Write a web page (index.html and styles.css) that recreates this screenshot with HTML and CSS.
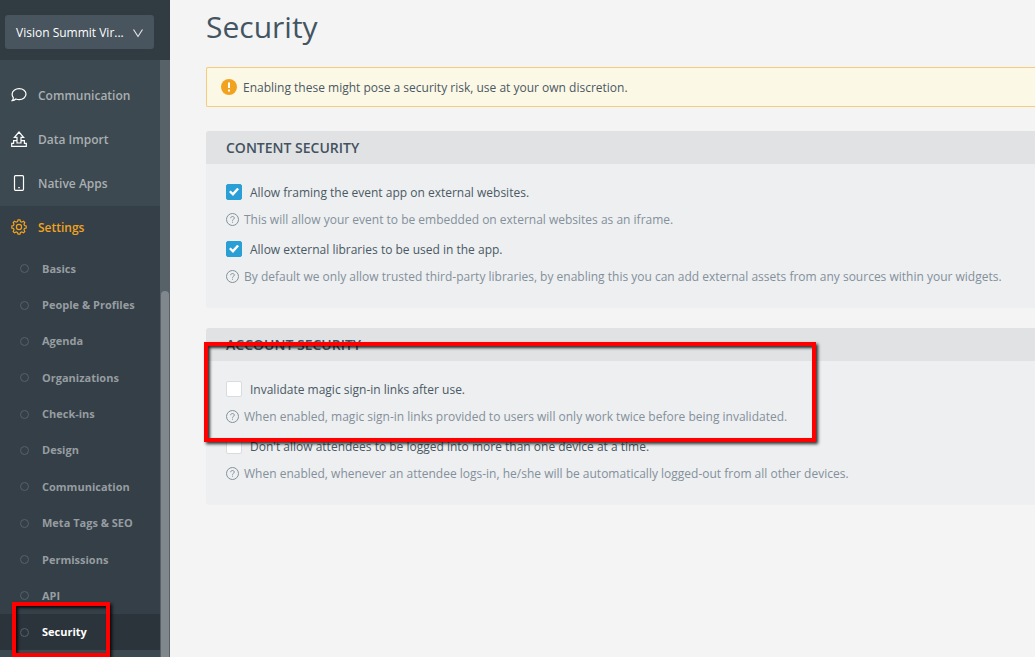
FILE: index.html
```html
<!DOCTYPE html>
<html lang="en">
<head>
<meta charset="utf-8">
<meta name="viewport" content="width=device-width, initial-scale=1">
<title>Security</title>
<link rel="stylesheet" href="styles.css">
</head>
<body>
<div class="app">
  <aside class="sidebar">
    <div class="sidebar-header">
      <button class="event-picker" type="button">
        <span class="event-name">Vision Summit Vir...</span>
        <svg class="chevron" width="12" height="10" viewBox="0 0 12 10"><path d="M1.500 1.500 6 8.500l4.500-7"/></svg>
      </button>
    </div>
    <div class="sidebar-body">
      <nav class="nav" aria-label="Main">
        <a class="nav-item" href="#communication">
          <svg class="nav-icon" width="16" height="18" viewBox="0 0 16 18"><path d="M8.200 1.700c3.900 0 6.800 2.300 6.800 5.300s-2.900 5.600-6.800 5.600c-1.200 0-2.300-.2-3.300-.6-1 1.100-2.200 1.600-3.800 1.700.9-.8 1.300-1.800 1.200-3C1.600 9.700 1.100 8.500 1.100 7.200c0-3.200 3.200-5.500 7.100-5.500z"/></svg>
          Communication
        </a>
        <a class="nav-item" href="#import">
          <svg class="nav-icon" width="16" height="18" viewBox="0 0 16 18"><path d="M6 12V6.300H3.400L8 1l4.600 5.300H10V12zM6 9.700H2.600v2.600H.700v3h14.600v-3h-1.900V9.700H10"/></svg>
          Data Import
        </a>
        <a class="nav-item" href="#apps">
          <svg class="nav-icon" width="16" height="18" viewBox="0 0 16 18"><rect x="3.500" y=".7" width="9" height="14.600" rx="1"/><path d="M7.300 12.700h1.500"/></svg>
          Native Apps
        </a>
        <div class="nav-group">
          <a class="nav-item nav-item-open" href="#settings">
            <svg class="nav-icon" width="16" height="18" viewBox="0 0 16 18"><path d="M6.500 2.600 7 .900h2l.5 1.700 1.300.6 1.700-.9 1.300 1.300-.8 1.700.5 1.200 1.700.5v2l-1.700.5-.5 1.300.8 1.700-1.300 1.300-1.700-.8-1.300.5-.5 1.700H7l-.5-1.700-1.300-.5-1.700.8-1.300-1.300.8-1.700-.5-1.300L.800 9V7l1.700-.5L3 5.300l-.8-1.700 1.300-1.300 1.700.9z"/><circle cx="8" cy="8" r="2.600"/></svg>
            Settings
          </a>
          <ul class="subnav">
            <li class="subnav-row"><a class="subnav-item" href="#basics">Basics</a></li>
            <li class="subnav-row"><a class="subnav-item" href="#people">People &amp; Profiles</a></li>
            <li class="subnav-row"><a class="subnav-item" href="#agenda">Agenda</a></li>
            <li class="subnav-row"><a class="subnav-item" href="#organizations">Organizations</a></li>
            <li class="subnav-row"><a class="subnav-item" href="#checkins">Check-ins</a></li>
            <li class="subnav-row"><a class="subnav-item" href="#design">Design</a></li>
            <li class="subnav-row"><a class="subnav-item" href="#messages">Communication</a></li>
            <li class="subnav-row"><a class="subnav-item" href="#meta">Meta Tags &amp; SEO</a></li>
            <li class="subnav-row"><a class="subnav-item" href="#permissions">Permissions</a></li>
            <li class="subnav-row"><a class="subnav-item" href="#api">API</a></li>
            <li class="subnav-row subnav-row-current"><a class="subnav-item" href="#security" aria-current="page">Security</a><span class="callout callout-nav"></span></li>
          </ul>
        </div>
      </nav>
      <div class="scroll-track"><div class="scroll-thumb"></div></div>
    </div>
  </aside>

  <main class="main">
    <h1 class="title">Security</h1>
    <div class="notice" role="note">
      <svg class="notice-icon" width="16" height="18" viewBox="0 0 16 18"><circle cx="8" cy="8" r="8" fill="#f1a31f"/><path d="M7 3.500h2v5.500H7zM7 10.500h2v2H7z" fill="#fff"/></svg>
      Enabling these might pose a security risk, use at your own discretion.
    </div>

    <section class="panel">
      <h2 class="panel-title">Content Security</h2>
      <div class="panel-body">
        <div class="setting">
          <label class="setting-label"><input class="check" type="checkbox" checked aria-describedby="h1">Allow framing the event app on external websites.</label>
          <p class="help" id="h1"><svg class="help-icon" width="13" height="14" viewBox="0 0 13 14"><circle cx="6.500" cy="6.500" r="6"/><path d="M4.700 5.200c0-1.100.8-1.700 1.800-1.700s1.800.6 1.800 1.600c0 1.300-1.800 1.200-1.800 2.600M6.500 8.700v1"/></svg>This will allow your event to be embedded on external websites as an iframe.</p>
        </div>
        <div class="setting">
          <label class="setting-label"><input class="check" type="checkbox" checked aria-describedby="h2">Allow external libraries to be used in the app.</label>
          <p class="help" id="h2"><svg class="help-icon" width="13" height="14" viewBox="0 0 13 14"><circle cx="6.500" cy="6.500" r="6"/><path d="M4.700 5.200c0-1.100.8-1.700 1.800-1.700s1.800.6 1.800 1.600c0 1.300-1.800 1.200-1.800 2.600M6.500 8.700v1"/></svg>By default we only allow trusted third-party libraries, by enabling this you can add external assets from any sources within your widgets.</p>
        </div>
      </div>
    </section>

    <section class="panel">
      <h2 class="panel-title">Account Security</h2>
      <div class="panel-body">
        <div class="setting">
          <label class="setting-label"><input class="check" type="checkbox" aria-describedby="h3">Invalidate magic sign-in links after use.</label>
          <p class="help" id="h3"><svg class="help-icon" width="13" height="14" viewBox="0 0 13 14"><circle cx="6.500" cy="6.500" r="6"/><path d="M4.700 5.200c0-1.100.8-1.700 1.800-1.700s1.800.6 1.800 1.600c0 1.300-1.800 1.200-1.800 2.600M6.500 8.700v1"/></svg>When enabled, magic sign-in links provided to users will only work twice before being invalidated.</p>
        </div>
        <div class="setting">
          <label class="setting-label"><input class="check" type="checkbox" aria-describedby="h4">Don't allow attendees to be logged into more than one device at a time.</label>
          <p class="help" id="h4"><svg class="help-icon" width="13" height="14" viewBox="0 0 13 14"><circle cx="6.500" cy="6.500" r="6"/><path d="M4.700 5.200c0-1.100.8-1.700 1.800-1.700s1.800.6 1.800 1.600c0 1.300-1.800 1.200-1.800 2.600M6.500 8.700v1"/></svg>When enabled, whenever an attendee logs-in, he/she will be automatically logged-out from all other devices.</p>
        </div>
      </div>
      <span class="callout callout-panel"></span>
    </section>
  </main>
</div>
</body>
</html>
```
FILE: styles.css
```css
* {
  box-sizing: border-box;
}

body {
  margin: 0;
  background: #f4f4f4;
  color: #4a5963;
  font: 12px/18px "Open Sans", "Noto Sans", sans-serif;
}

.app {
  display: flex;
  height: 100vh;
  overflow: hidden;
}

/* Sidebar */
.sidebar {
  display: flex;
  flex-direction: column;
  flex: none;
  width: 170px;
  background: #3d4950;
}

.sidebar-header {
  flex: none;
  padding: 15px 16px 11px 5px;
  background: #303b42;
}

.event-picker {
  display: flex;
  align-items: center;
  justify-content: space-between;
  width: 100%;
  height: 34px;
  padding: 2px 10px 0 11px;
  border: 0;
  border-radius: 3px;
  background: #48555e;
  color: #fff;
  font: 500 12px/16px "Open Sans", "Noto Sans", sans-serif;
  white-space: nowrap;
}

.chevron {
  flex: none;
  fill: none;
  stroke: #dde1e3;
  stroke-width: 1.2;
}

.sidebar-body {
  display: flex;
  flex: 1;
  min-height: 0;
}

.nav {
  flex: 1;
  padding-top: 14px;
}

.nav-item {
  display: flex;
  align-items: center;
  gap: 11px;
  height: 44px;
  padding-left: 11px;
  color: #a9afb2;
  font-weight: 700;
  font-weight: 600;
  text-decoration: none;
}

.nav-icon {
  flex: none;
  fill: none;
  stroke: #fff;
  stroke-width: 1.2;
}

.nav-group {
  background: #353f47;
}

.nav-item-open {
  color: #f1a31f;
}

.nav-item-open .nav-icon {
  stroke: #f1a31f;
}

.subnav {
  display: grid;
  grid-auto-rows: 1fr;
  min-height: 400px;
  margin: 0;
  padding: 0;
  list-style: none;
}

.subnav-row {
  display: flex;
  position: relative;
}

.subnav-row-current {
  background: #2c343b;
}

.subnav-item {
  display: flex;
  align-items: center;
  gap: 13px;
  flex: 1;
  padding: 1px 0 0 20px;
  color: #969da1;
  font-size: 11px;
  font-weight: 700;
  text-decoration: none;
}

.subnav-item::before {
  content: "";
  width: 7px;
  height: 7px;
  border: 1px solid #56616a;
  border-radius: 50%;
}

.subnav-row-current .subnav-item {
  color: #fff;
}

.scroll-track {
  flex: none;
  width: 10px;
  padding: 231px 1px 0;
  background: #566168;
}

.scroll-thumb {
  height: 100%;
  border-radius: 4px 4px 0 0;
  background: #81888d;
}

/* Content */
.main {
  flex: 1;
  min-width: 0;
  padding: 7px 0 0 36px;
}

.title {
  margin: 0 0 20px;
  color: #435462;
  font-size: 30px;
  font-weight: 400;
  line-height: 40px;
}

.notice {
  display: flex;
  align-items: center;
  gap: 6px;
  min-height: 40px;
  margin-bottom: 24px;
  padding: 2px 14px 0;
  border: 1px solid #f5cc7e;
  border-right: 0;
  border-radius: 2px 0 0 2px;
  background: #fcf8e6;
}

.panel {
  position: relative;
  margin-bottom: 20px;
  border-radius: 3px 0 0 3px;
  background: #edeff1;
}

.panel-title {
  margin: 0;
  padding: 0 20px;
  border-radius: 3px 0 0;
  background: #e1e2e4;
  color: #42525f;
  font-size: 14px;
  font-weight: 600;
  line-height: 33px;
  text-transform: uppercase;
}

.panel-body {
  display: grid;
  gap: 12px;
  padding: 20px 20px 22px;
}

.setting {
  display: grid;
  gap: 9px;
}

.setting-label {
  display: flex;
  align-items: flex-start;
  gap: 8px;
}

.check {
  appearance: none;
  display: grid;
  flex: none;
  place-items: center;
  width: 16px;
  height: 16px;
  margin: 0;
  border: 1px solid #d9dcde;
  border-radius: 2px;
  background: #fff;
}

.check:checked {
  border-color: #2a9fd6;
  background: #2a9fd6;
}

.check:checked::before {
  content: "";
  width: 10px;
  height: 9px;
  background: #fff;
  clip-path: polygon(0 50%, 16% 34%, 38% 56%, 82% 4%, 100% 20%, 40% 94%);
}

.help {
  display: flex;
  align-items: center;
  gap: 5px;
  margin: 0;
  color: #84909a;
}

.help-icon {
  flex: none;
  fill: none;
  stroke: #84909a;
}

/* Red callout frames laid over the page */
.callout {
  position: absolute;
  border: 4px solid #f00;
  box-shadow: 2px 2px 3px #000c, inset 2px 2px 3px #000c;
  pointer-events: none;
}

.callout-nav {
  top: -12px;
  bottom: -7px;
  left: 12px;
  width: 98px;
}

.callout-panel {
  top: 14px;
  left: -2px;
  width: 612px;
  height: 100px;
}
```
